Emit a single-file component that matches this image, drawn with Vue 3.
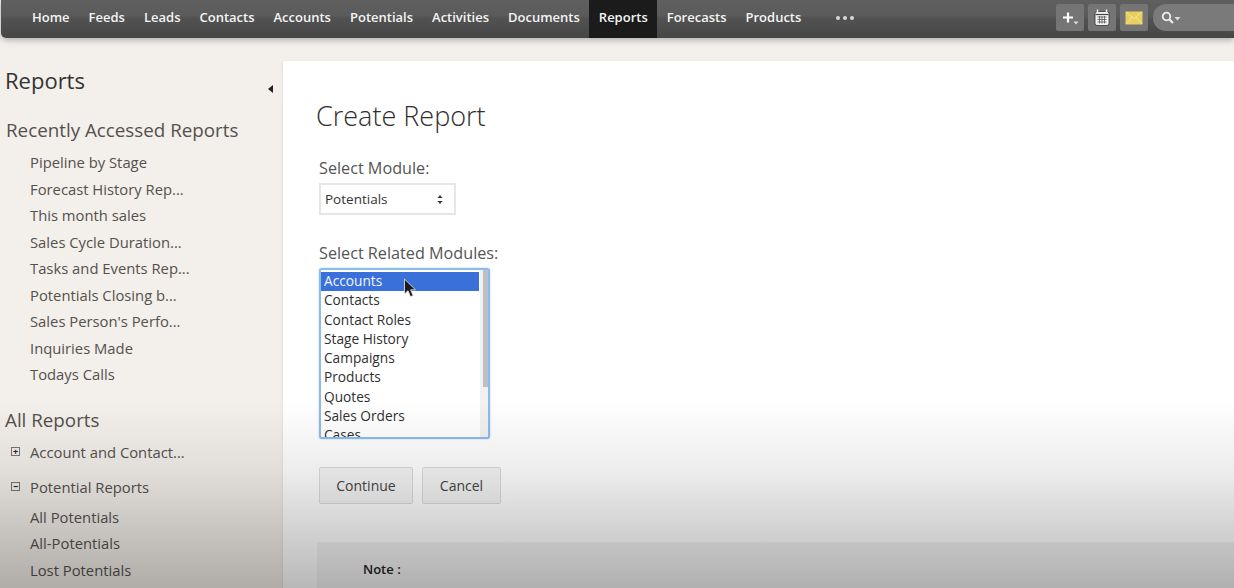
<script setup>
const navItems = ['Home', 'Feeds', 'Leads', 'Contacts', 'Accounts', 'Potentials', 'Activities', 'Documents', 'Reports', 'Forecasts', 'Products'];
const recent = ['Pipeline by Stage', 'Forecast History Rep...', 'This month sales', 'Sales Cycle Duration...', 'Tasks and Events Rep...', 'Potentials Closing b...', "Sales Person's Perfo...", 'Inquiries Made', 'Todays Calls'];
const potentials = ['All Potentials', 'All-Potentials', 'Lost Potentials'];
const modules = ['Accounts', 'Contacts', 'Contact Roles', 'Stage History', 'Campaigns', 'Products', 'Quotes', 'Sales Orders', 'Cases'];
</script>

<template>
  <div class="page">
    <header class="topbar">
      <nav class="nav">
        <a v-for="item in navItems" :key="item" class="nav-item" :class="{ active: item === 'Reports' }">{{ item }}</a>
        <span class="dots"><i></i><i></i><i></i></span>
      </nav>
      <div class="tools">
        <span class="tool">
          <svg width="20" height="20" viewBox="0 0 20 20"><path d="M8 4.500v10M3 9.500h10" stroke="#fff" stroke-width="2.200" fill="none" /><path d="M13.500 13.500h5l-2.500 3z" fill="#ddd" /></svg>
        </span>
        <span class="tool">
          <svg width="18" height="20" viewBox="0 0 18 20"><rect x="2" y="3.500" width="14" height="14" rx="2" fill="#f2f2f2" stroke="#333" stroke-width="0.800" /><path d="M4.500 1.500v3M13.500 1.500v3" stroke="#f2f2f2" stroke-width="1.500" /><path d="M2.500 6.500h13" stroke="#444" stroke-width="1.200" /><path d="M4.500 9h9M4.500 11.500h9M4.500 14h9M6.500 8v7.500M9 8v7.500M11.500 8v7.500" stroke="#555" stroke-width="0.800" /></svg>
        </span>
        <span class="tool">
          <svg width="18" height="14" viewBox="0 0 18 14"><rect x="0.500" y="0.500" width="17" height="13" fill="#e9cf5c" /><path d="M1 1l8 6.500L17 1M1 13l6-7M17 13l-6-7" stroke="#f5e7a0" stroke-width="1" fill="none" /></svg>
        </span>
        <div class="search">
          <svg width="22" height="14" viewBox="0 0 22 14"><circle cx="5.500" cy="5.500" r="3.800" stroke="#eee" stroke-width="1.800" fill="none" /><path d="M8.500 8.500l3.500 3.500" stroke="#eee" stroke-width="2.200" /><path d="M13.500 6h6l-3 3.500z" fill="#ddd" /></svg>
        </div>
      </div>
    </header>

    <div class="body">
      <aside class="sidebar">
        <div class="side-top">
          <h2 class="side-title">Reports</h2>
          <span class="collapse"></span>
        </div>
        <h3 class="side-heading">Recently Accessed Reports</h3>
        <ul class="side-list">
          <li v-for="r in recent" :key="r">{{ r }}</li>
        </ul>
        <h3 class="side-heading all">All Reports</h3>
        <div class="folder">
          <span class="box">+</span>
          <span>Account and Contact...</span>
        </div>
        <div class="folder second">
          <span class="box">−</span>
          <span>Potential Reports</span>
        </div>
        <ul class="side-list sub">
          <li v-for="p in potentials" :key="p">{{ p }}</li>
        </ul>
      </aside>

      <main class="main">
        <h1 class="title">Create Report</h1>
        <label class="field-label">Select Module:</label>
        <div class="select">
          <span>Potentials</span>
          <svg width="6" height="9" viewBox="0 0 6 9"><path d="M3 0l2.500 3h-5zM3 9L.5 6h5z" fill="#333" /></svg>
        </div>
        <label class="field-label related">Select Related Modules:</label>
        <div class="listbox">
          <div class="options">
            <div v-for="(m, i) in modules" :key="m" class="option" :class="{ selected: i === 0 }">{{ m }}</div>
          </div>
          <div class="scrollbar"><div class="thumb"></div></div>
          <svg class="cursor" width="15" height="21" viewBox="0 0 15 21"><path d="M1.500 1v15l3.500-3.300 2.500 6 2.600-1.100-2.500-5.800h4.900z" fill="#1b1b1b" stroke="#eee" stroke-width="0.800" /></svg>
        </div>
        <div class="actions">
          <button class="btn continue">Continue</button>
          <button class="btn cancel">Cancel</button>
        </div>
        <div class="note">Note :</div>
      </main>
    </div>

    <div class="shade"></div>
  </div>
</template>

<style>
html, body {
  margin: 0;
  background: #f3efea;
}
</style>

<style scoped>
.page {
  position: relative;
  width: 1234px;
  height: 588px;
  overflow: hidden;
  background: #f3efea;
  font-family: "Open Sans", "Liberation Sans", sans-serif;
  color: #444;
}

.topbar {
  display: flex;
  align-items: stretch;
  justify-content: space-between;
  height: 38px;
  margin-left: 1px;
  padding-left: 21.500px;
  border-radius: 0 0 0 5px;
  background: linear-gradient(#5f5f5f 0, #5b5b5b 40%, #525252 48%, #464646 100%);
  box-shadow: 0 2px 6px rgba(0, 0, 0, 0.28);
}

.nav {
  display: flex;
  align-items: stretch;
}

.nav-item {
  display: flex;
  align-items: center;
  padding: 0 9.500px 4px;
  color: #f4f4f4;
  font-size: 13px;
  font-weight: 600;
}

.nav-item.active {
  background: #1b1b1b;
}

.dots {
  display: flex;
  align-items: center;
  gap: 3px;
  margin-left: 25px;
  padding-bottom: 2px;
}

.dots i {
  width: 4px;
  height: 4px;
  border-radius: 50%;
  background: #d8d8d8;
}

.tools {
  display: flex;
  align-items: center;
  gap: 4px;
  padding-bottom: 3px;
}

.tool {
  display: flex;
  align-items: center;
  justify-content: center;
  width: 28px;
  height: 27px;
  border-radius: 2px;
  background: #757575;
}

.search {
  display: flex;
  align-items: center;
  box-sizing: border-box;
  width: 81px;
  height: 27px;
  margin-left: 1px;
  padding-left: 8px;
  border-radius: 13px 0 0 13px;
  background: #7a7a7a;
}

.body {
  display: flex;
  height: 550px;
}

.sidebar {
  flex: none;
  width: 283px;
  box-sizing: border-box;
  padding: 26px 0 0 5px;
}

.side-top {
  display: flex;
  align-items: center;
  justify-content: space-between;
  padding-right: 10px;
}

.side-title {
  margin: 0;
  font-size: 22px;
  line-height: 32px;
  font-weight: 400;
  color: #333;
}

.collapse {
  margin-top: 18px;
  border-top: 4px solid transparent;
  border-bottom: 4px solid transparent;
  border-right: 5px solid #222;
}

.side-heading {
  margin: 20px 0 0 1px;
  font-size: 18.800px;
  line-height: 28px;
  font-weight: 400;
  color: #55514e;
}

.side-heading.all {
  margin: 18px 0 0;
}

.side-list {
  list-style: none;
  margin: 5px 0 0;
  padding: 0 0 0 25px;
  font-size: 14.800px;
  color: #55514e;
}

.side-list li {
  height: 26.500px;
  line-height: 26.500px;
}

.side-list.sub {
  margin-top: 4px;
}

.folder {
  display: flex;
  align-items: center;
  gap: 10px;
  margin: 5px 0 0 6px;
  font-size: 14.800px;
  line-height: 26px;
  color: #55514e;
}

.folder.second {
  margin-top: 9px;
}

.box {
  display: flex;
  align-items: center;
  justify-content: center;
  box-sizing: border-box;
  width: 9px;
  height: 9px;
  border: 1px solid #777;
  font-size: 9px;
  line-height: 1;
  font-weight: 700;
  color: #222;
}

.main {
  flex: 1;
  min-width: 0;
  margin-top: 23px;
  padding: 36px 0 0 34px;
  background: #fff;
  box-shadow: -1px 0 2px rgba(0, 0, 0, 0.06);
}

.title {
  margin: 0 0 22px -1px;
  font-size: 27px;
  line-height: 38px;
  font-weight: 300;
  color: #2e2e2e;
}

.field-label {
  display: block;
  margin: 0 0 4px 2px;
  font-size: 16.200px;
  line-height: 22px;
  font-weight: 400;
  color: #555;
}

.field-label.related {
  margin-top: 27px;
  margin-bottom: 4px;
}

.select {
  display: flex;
  align-items: center;
  justify-content: space-between;
  box-sizing: border-box;
  width: 137px;
  height: 32px;
  margin-left: 2px;
  padding: 0 11px 0 4px;
  border: 2px solid #e6e6e6;
  font-size: 13.500px;
  font-weight: 500;
  color: #333;
}

.listbox {
  position: relative;
  display: flex;
  box-sizing: border-box;
  width: 171px;
  height: 171px;
  margin-left: 2px;
  padding: 2px 0 0 0;
  border: 2px solid #8dbbea;
  border-radius: 3px;
  box-shadow: 0 0 2px #a9cdf2;
  overflow: hidden;
  background: #fff;
}

.options {
  flex: 1;
  min-width: 0;
  overflow: hidden;
}

.option {
  height: 19.300px;
  line-height: 18px;
  padding-left: 3px;
  font-size: 13.700px;
  color: #2f2f2f;
}

.option.selected {
  background: #3a70da;
  color: #f3f6ff;
}

.scrollbar {
  flex: none;
  width: 8px;
  margin-left: 1px;
  margin-top: -2px;
  background: #f1f1f1;
}

.thumb {
  width: 5px;
  height: 117px;
  margin-left: 3px;
  background: #bcc0c6;
}

.cursor {
  position: absolute;
  left: 82px;
  top: 8px;
}

.actions {
  display: flex;
  gap: 9px;
  margin: 28px 0 0 2px;
}

.btn {
  height: 37px;
  border: 1px solid #dcdcdc;
  border-radius: 2px;
  background: #f5f5f5;
  font-family: inherit;
  font-size: 14px;
  color: #444;
}

.continue {
  width: 94px;
}

.cancel {
  width: 79px;
}

.note {
  height: 60px;
  margin-top: 38px;
  box-sizing: border-box;
  padding: 17px 0 0 46px;
  background: #f4f4f4;
  font-size: 13px;
  font-weight: 600;
  line-height: 20px;
  color: #222;
}

/* video fade along the bottom edge of the frame */
.shade {
  position: absolute;
  left: 0;
  right: 0;
  top: 400px;
  bottom: 0;
  background: linear-gradient(rgba(0, 0, 0, 0), rgba(0, 0, 0, 0.07) 37%, rgba(0, 0, 0, 0.28));
  pointer-events: none;
}
</style>
